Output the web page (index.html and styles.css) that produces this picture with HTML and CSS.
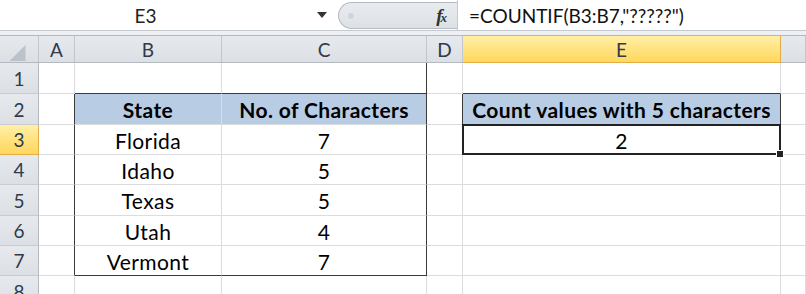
FILE: index.html
```html
<!DOCTYPE html>
<html lang="en">
<head>
    <meta charset="UTF-8">
    <title>COUNTIF - 5 characters</title>
    <link rel="stylesheet" href="styles.css">
</head>
<body>
    <div class="formula-bar">
        <div class="name-box">
            <span class="name">E3</span>
            <span class="arrow"></span>
        </div>
        <div class="pill">
            <span class="knob"></span>
            <span class="fx"><i>f</i><i class="x">x</i></span>
        </div>
        <div class="formula">=COUNTIF(B3:B7,"?????")</div>
    </div>
    <div class="strip"></div>

    <div class="sheet">
        <!-- column headers -->
        <div class="hd corner"><span class="tri"></span></div>
        <div class="hd">A</div>
        <div class="hd">B</div>
        <div class="hd">C</div>
        <div class="hd">D</div>
        <div class="hd sel">E</div>
        <div class="hd"></div>

        <!-- row 1 -->
        <div class="rh">1</div>
        <div class="c"></div>
        <div class="c b-bot"></div>
        <div class="c b-bot b-right"></div>
        <div class="c"></div>
        <div class="c b-bot"></div>
        <div class="c"></div>

        <!-- row 2 -->
        <div class="rh">2</div>
        <div class="c b-right"></div>
        <div class="c th">State</div>
        <div class="c th b-right">No. of Characters</div>
        <div class="c b-right"></div>
        <div class="c th b-right b-bot">Count values with 5 characters</div>
        <div class="c"></div>

        <!-- row 3 -->
        <div class="rh sel">3</div>
        <div class="c b-right"></div>
        <div class="c">Florida</div>
        <div class="c b-right">7</div>
        <div class="c b-right"></div>
        <div class="c active b-right b-bot">2</div>
        <div class="c"></div>

        <!-- row 4 -->
        <div class="rh">4</div>
        <div class="c b-right"></div>
        <div class="c">Idaho</div>
        <div class="c b-right">5</div>
        <div class="c"></div>
        <div class="c"></div>
        <div class="c"></div>

        <!-- row 5 -->
        <div class="rh">5</div>
        <div class="c b-right"></div>
        <div class="c">Texas</div>
        <div class="c b-right">5</div>
        <div class="c"></div>
        <div class="c"></div>
        <div class="c"></div>

        <!-- row 6 -->
        <div class="rh">6</div>
        <div class="c b-right"></div>
        <div class="c">Utah</div>
        <div class="c b-right">4</div>
        <div class="c"></div>
        <div class="c"></div>
        <div class="c"></div>

        <!-- row 7 -->
        <div class="rh">7</div>
        <div class="c b-right"></div>
        <div class="c b-bot">Vermont</div>
        <div class="c b-bot b-right">7</div>
        <div class="c"></div>
        <div class="c"></div>
        <div class="c"></div>

        <!-- row 8 -->
        <div class="rh">8</div>
        <div class="c"></div>
        <div class="c"></div>
        <div class="c"></div>
        <div class="c"></div>
        <div class="c"></div>
        <div class="c"></div>
    </div>
</body>
</html>
```

FILE: styles.css
```css
* {
    box-sizing: border-box;
}
body {
    margin: 0;
    width: 806px;
    height: 294px;
    overflow: hidden;
    background: #fff;
    font-family: 'Lato', 'Liberation Sans', sans-serif;
    color: #000;
}

/* formula bar */
.formula-bar {
    display: flex;
    height: 31px;
    border-bottom: 1px solid #c5cad1;
    background: #fff;
}
.name-box {
    width: 338px;
    display: flex;
    align-items: center;
}
.name-box .name {
    flex: 1;
    text-align: center;
    font-size: 19px;
    color: #222;
    margin-right: 26px;
}
.name-box .arrow {
    width: 0;
    height: 0;
    border-left: 5px solid transparent;
    border-right: 5px solid transparent;
    border-top: 6px solid #333;
    margin-right: 11px;
}
.pill {
    width: 119px;
    margin: 2px 0 1px;
    background: linear-gradient(#e8ebef, #dde1e6);
    border: 1px solid #b4bac2;
    border-right: none;
    border-radius: 14px 0 0 14px;
    display: flex;
    align-items: center;
    justify-content: space-between;
    padding: 0 12px 0 8px;
}
.knob {
    width: 8px;
    height: 8px;
    border-radius: 50%;
    background: #cfd3d8;
    border: 1px solid #e9ebee;
}
.fx {
    font-family: 'Liberation Serif', serif;
    font-size: 19px;
    color: #333;
    font-weight: bold;
    letter-spacing: -2px;
}
.fx .x {
    font-size: 13px;
}
.formula {
    flex: 1;
    border-left: 1px solid #c5cad1;
    display: flex;
    align-items: center;
    padding-left: 11px;
    font-size: 19px;
    color: #111;
}
.strip {
    height: 5px;
    background: #eef0f3;
    border-bottom: 1px solid #b0b7c0;
}

/* sheet grid */
.sheet {
    display: grid;
    grid-template-columns: 39px 36px 147px 205px 36px 318px 1fr;
    grid-template-rows: 27px 31px 31px 30px 30px 31px 30px 30px 31px;
}
.hd,
.rh {
    background: linear-gradient(#e6e9ed, #dcdfe4);
    border-right: 1px solid #c2c7cf;
    border-bottom: 1px solid #b3b9c1;
    color: #2f3a4a;
    font-size: 19px;
    display: flex;
    align-items: center;
    justify-content: center;
}
.rh {
    border-bottom-color: #c8ccd2;
    border-right-color: #b3b9c1;
}
.hd.sel,
.rh.sel {
    background: linear-gradient(#ffefa6, #ffd75c);
    border-right-color: #e3ae48;
    border-bottom-color: #e3ae48;
}
.corner .tri {
    width: 16px;
    height: 16px;
    background: #bcc2ca;
    clip-path: polygon(100% 0, 100% 100%, 0 100%);
    margin: 8px 0 0 -3px;
}
.c {
    border-right: 1px solid #dadcdd;
    border-bottom: 1px solid #dadcdd;
    font-size: 21px;
    letter-spacing: 0.4px;
    display: flex;
    align-items: center;
    justify-content: center;
    white-space: nowrap;
    padding-top: 1px;
}
.c.b-right {
    border-right-color: #3a3a3a;
}
.c.b-bot {
    border-bottom-color: #3a3a3a;
}
.c.th {
    background: #b8cce4;
    font-weight: bold;
}
.c.active {
    position: relative;
}
.c.active::after {
    content: "";
    position: absolute;
    left: -1px;
    top: -1px;
    right: -1px;
    bottom: -1px;
    border: 2px solid #222;
    box-shadow: inset 0 0 0 1px #fff;
}
.c.active::before {
    content: "";
    position: absolute;
    right: -4px;
    bottom: -4px;
    width: 6px;
    height: 6px;
    background: #222;
    border: 1px solid #fff;
    z-index: 1;
}
```
